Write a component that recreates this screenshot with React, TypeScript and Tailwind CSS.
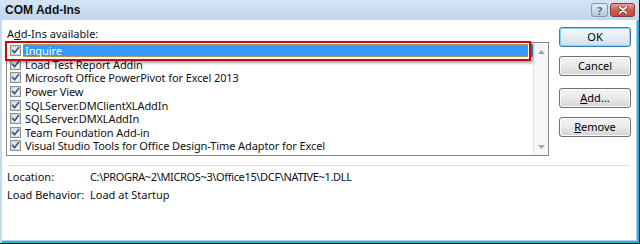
import React from "react";

const items = [
  "Inquire",
  "Load Test Report Addin",
  "Microsoft Office PowerPivot for Excel 2013",
  "Power View",
  "SQLServer.DMClientXLAddIn",
  "SQLServer.DMXLAddIn",
  "Team Foundation Add-in",
  "Visual Studio Tools for Office Design-Time Adaptor for Excel",
];

function Check() {
  return (
    <svg width="11" height="11" viewBox="0 0 11 11" className="shrink-0">
      <defs>
        <linearGradient id="cbg" x1="0" y1="0" x2="1" y2="1">
          <stop offset="0" stopColor="#dcdcdc" />
          <stop offset="1" stopColor="#ffffff" />
        </linearGradient>
      </defs>
      <rect x="0.5" y="0.5" width="10" height="10" fill="#f4f4f4" stroke="#8e8f8f" />
      <rect x="1.5" y="1.5" width="8" height="8" fill="url(#cbg)" stroke="#c8c8c8" strokeWidth="0.6" />
      <path d="M2.6 5.4 L4.6 7.8 L8.6 2.6" fill="none" stroke="#3a5a9a" strokeWidth="1.7" strokeLinecap="round" strokeLinejoin="round" />
    </svg>
  );
}

function Btn({ children, def }: { children: React.ReactNode; def?: boolean }) {
  return (
    <div
      className={
        def
          ? "h-[20px] w-[72px] rounded-[3px] border border-[#3c7fb1] bg-gradient-to-b from-[#f4f8fb] via-[#e6eef5] to-[#cfdce8] shadow-[inset_0_0_0_1px_#7fd6f8] flex items-center justify-center text-[11px] text-black"
          : "h-[20px] w-[72px] rounded-[3px] border border-[#707070] bg-gradient-to-b from-[#f3f3f3] via-[#eaeaea] to-[#d2d2d2] shadow-[inset_0_0_0_1px_#fbfbfb] flex items-center justify-center text-[11px] text-black"
      }
    >
      {children}
    </div>
  );
}

export default function App() {
  return (
    <div
      className="w-[640px] h-[244px] bg-[#c6daee] border-r border-b border-[#161b20] flex flex-col overflow-hidden"
      style={{ fontFamily: '"Noto Sans", "Open Sans", sans-serif' }}
    >
      {/* title bar */}
      <div className="h-[20px] shrink-0 bg-gradient-to-b from-[#d4e4f4] to-[#c0d6ed] flex items-start">
        <div className="pl-[5px] pt-[3px] text-[12px] leading-[14px] font-bold text-[#111] flex-1" style={{ fontFamily: '"Liberation Sans", Arial, sans-serif' }}>
          COM Add-Ins
        </div>
        <div className="flex gap-[2px] pt-[3px] pr-[4px]">
          <div className="w-[17px] h-[14px] rounded-[3px] border border-[#8297b1] bg-gradient-to-b from-[#e4edf7] to-[#b4c8df] flex items-center justify-center text-[11px] font-bold leading-none text-[#5a6f8c]">
            ?
          </div>
          <div className="w-[25px] h-[14px] rounded-[3px] border border-[#7f3a33] bg-gradient-to-b from-[#e4a196] via-[#cf5d50] to-[#c6473a] flex items-center justify-center">
            <svg width="10" height="8" viewBox="0 0 10 8">
              <path d="M1.5 1 L8.5 7 M8.5 1 L1.5 7" stroke="#5a2620" strokeWidth="3" strokeLinecap="round" />
              <path d="M1.5 1 L8.5 7 M8.5 1 L1.5 7" stroke="#ffffff" strokeWidth="1.7" strokeLinecap="round" />
            </svg>
          </div>
        </div>
      </div>

      {/* frame */}
      <div className="flex-1 ml-[2px] border-r-2 border-b-2 border-[#36aadc] flex">
        <div className="flex-1 bg-white border-r border-b border-[#a6d7ef] flex flex-col pl-[4px] pt-[7px] text-[11px] text-[#111]">
          <div className="flex">
            <div className="w-[543px] flex flex-col">
              <div className="h-[15px] leading-[13px] pl-[1px]">
                A<span className="underline">d</span>d-Ins available:
              </div>
              <div className="h-[114px] border border-[#828790] flex relative">
                <div className="flex-1 flex flex-col pt-[1px] tracking-[-0.1px]">
                  {items.map((t, i) => (
                    <div key={t} className="h-[13.6px] flex items-center">
                      <div className="ml-[3px] mr-[2px] flex items-center">
                        <Check />
                      </div>
                      <div
                        className={
                          i === 0
                            ? "flex-1 h-[13px] bg-[#3399ff] text-white pl-[2px] leading-[12px] border-y border-dotted border-[#c7a060]"
                            : "flex-1 pl-[2px] leading-[13px]"
                        }
                      >
                        {t}
                      </div>
                    </div>
                  ))}
                </div>
                <div className="w-[15px] bg-[#f6f6f6] border-l border-[#e4e4e4] flex flex-col justify-between">
                  <div className="h-[17px] flex items-center justify-center">
                    <svg width="7" height="4" viewBox="0 0 7 4">
                      <path d="M0 4 L3.5 0 L7 4 Z" fill="#a3a3a3" />
                    </svg>
                  </div>
                  <div className="h-[17px] flex items-center justify-center">
                    <svg width="7" height="4" viewBox="0 0 7 4">
                      <path d="M0 0 L3.5 4 L7 0 Z" fill="#a3a3a3" />
                    </svg>
                  </div>
                </div>
                {/* red annotation box */}
                <div className="absolute left-[-2px] top-[-2px] w-[526px] h-[20px] border-2 border-[#c40a0a] shadow-[inset_0_0_0_1px_#ffffff,2px_2px_3px_rgba(0,0,0,0.35)] pointer-events-none" />
              </div>
            </div>
            <div className="ml-[10px] flex flex-col">
              <Btn def>OK</Btn>
              <div className="mt-[9px]">
                <Btn>Cancel</Btn>
              </div>
              <div className="mt-[12px]">
                <Btn>
                  <span className="underline">A</span>dd...
                </Btn>
              </div>
              <div className="mt-[9px]">
                <Btn>
                  <span className="underline">R</span>emove
                </Btn>
              </div>
            </div>
          </div>
          <div className="mt-[9px] ml-[1px] w-[623px] h-px bg-[#dedede]" />
          <div className="mt-[4px] ml-[1px] flex h-[14px] leading-[14px]">
            <div className="w-[83px]">Location:</div>
            <div className="tracking-[-0.35px]">C:\PROGRA~2\MICROS~3\Office15\DCF\NATIVE~1.DLL</div>
          </div>
          <div className="mt-[4px] ml-[1px] flex h-[14px] leading-[14px]">
            <div className="w-[83px]">Load Behavior:</div>
            <div>Load at Startup</div>
          </div>
        </div>
      </div>
    </div>
  );
}
